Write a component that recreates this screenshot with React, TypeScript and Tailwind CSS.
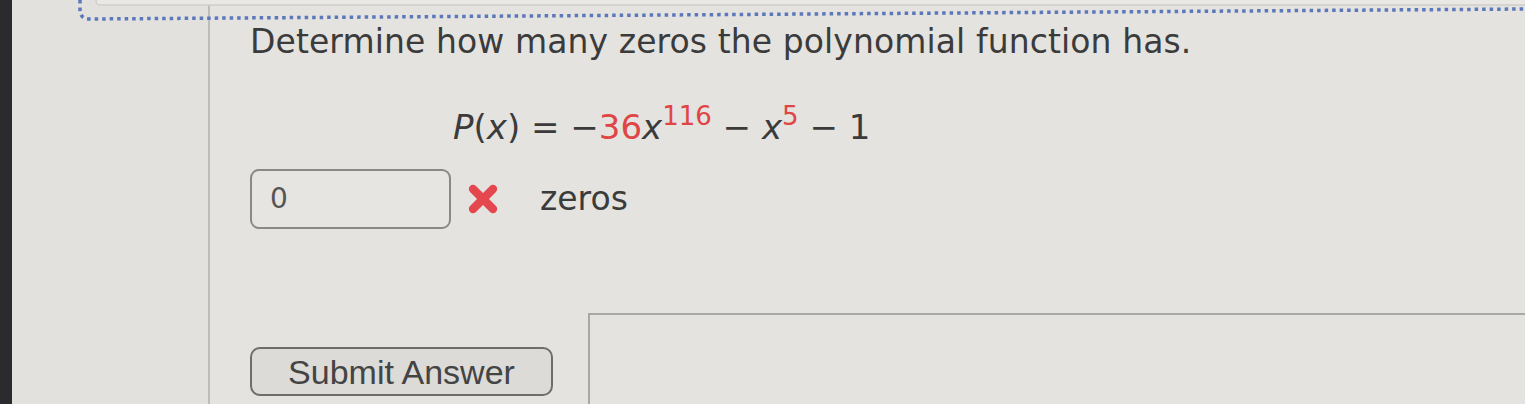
import { X } from "lucide-react";

export default function App() {
  return (
    <div className="relative flex h-[404px] w-full overflow-hidden bg-[#e4e3df] font-['DejaVu_Sans',sans-serif] text-[#3a3a3a]">
      {/* Bezel of the screen. */}
      <div className="w-[12px] shrink-0 bg-[#2a2a2f]" />

      {/* Sidebar column. */}
      <div className="w-[198px] shrink-0 border-r-2 border-[#bdbcb8] bg-[#e2e1dd]" />

      {/* Question body. */}
      <div className="flex min-w-0 flex-1 flex-col pl-[40px]">
        <h1 className="mt-[22px] text-[33px] leading-[40px] tracking-[0.1px] text-[#3b3b3b]">
          Determine how many zeros the polynomial function has.
        </h1>

        <p className="mt-[45px] pl-[203px] text-[34px] leading-[40px] text-[#3b3b3b]">
          <span className="italic">P</span>(<span className="italic">x</span>) = −
          <span className="text-[#e04545]">36</span>
          <span className="italic">x</span>
          <sup className="relative top-[-14px] text-[26px] text-[#e04545]">116</sup> −{" "}
          <span className="italic">x</span>
          <sup className="relative top-[-14px] text-[26px] text-[#e04545]">5</sup> − 1
        </p>

        <div className="mt-[22px] flex items-center">
          <div className="flex h-[60px] w-[201px] items-center rounded-[9px] border-2 border-[#8a8986] bg-[#e6e5e1] pl-[18px] text-[28px] text-[#555]">
            0
          </div>
          <X className="ml-[12px] h-[40px] w-[40px] text-[#e4484e]" strokeWidth={5} />
          <span className="ml-[37px] text-[33px] text-[#3b3b3b]">zeros</span>
        </div>

        <div className="mt-[84px] flex items-start">
          <button className="mt-[34px] h-[49px] w-[303px] shrink-0 rounded-[10px] border-2 border-[#6e6d6a] bg-[#dcdbd7] font-['Liberation_Sans',sans-serif] text-[34px] leading-none text-[#444]">
            Submit Answer
          </button>
          <div className="ml-[35px] h-[120px] flex-1 border-l-2 border-t-2 border-[#a9a8a4]" />
        </div>
      </div>

      {/* Dotted focus ring round the previous block. */}
      <svg className="absolute left-0 top-0" width="1525" height="30" viewBox="0 0 1525 30">
        <rect x="96" y="-10" width="1440" height="15" rx="4" fill="#e9e8e4" stroke="#cfceca" strokeWidth="1.5" />
        <path
          d="M80 0 L80 10 Q80 19 90 19 L1525 9"
          fill="none"
          stroke="#5b78bb"
          strokeWidth="3.5"
          strokeDasharray="3.5 4"
        />
      </svg>
    </div>
  );
}
